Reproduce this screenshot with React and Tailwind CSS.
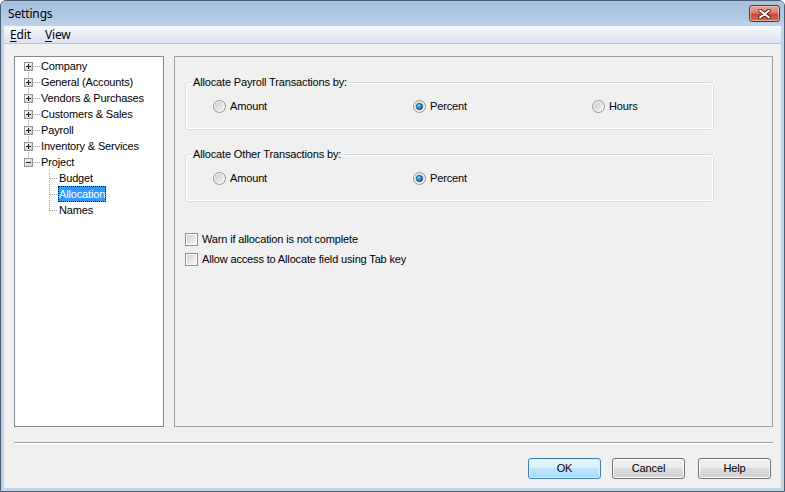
import React from "react";

const uiFont = "font-['Liberation_Sans',Arial,sans-serif] text-[11px] tracking-[-0.15px] text-black";
const captionFont = "font-['Noto_Sans','Open_Sans',sans-serif] text-[12px] text-black";

function Radio({ checked }) {
  return (
    <svg width="13" height="13" viewBox="0 0 13 13" className="shrink-0">
      <defs>
        <linearGradient id="radioFace" x1="0" y1="0" x2="1" y2="1">
          <stop offset="0" stopColor="#c9c9c9" />
          <stop offset="1" stopColor="#f8f8f8" />
        </linearGradient>
        <radialGradient id="radioDot" cx="0.4" cy="0.35" r="0.75">
          <stop offset="0" stopColor="#9fdcfb" />
          <stop offset="0.45" stopColor="#2a88cf" />
          <stop offset="1" stopColor="#0a3a6c" />
        </radialGradient>
      </defs>
      <circle cx="6.5" cy="6.5" r="6" fill="#f6f6f6" stroke="#8e8f8f" />
      <circle cx="6.5" cy="6.5" r="4.5" fill="url(#radioFace)" />
      {checked && <circle cx="6.5" cy="6.5" r="3.2" fill="url(#radioDot)" stroke="#16426e" strokeWidth="0.6" />}
    </svg>
  );
}

function RadioOption({ label, checked, className = "" }) {
  return (
    <div className={`flex items-center gap-[4px] h-[13px] ${className}`}>
      <Radio checked={checked} />
      <span className="leading-[13px]">{label}</span>
    </div>
  );
}

function CheckBox({ label }) {
  return (
    <div className="flex items-center gap-[4px] h-[13px]">
      <span className="w-[13px] h-[13px] border border-[#8e8f8f] bg-white p-[1px] shrink-0">
        <span className="block w-full h-full bg-gradient-to-br from-[#d2d2d2] to-[#f7f7f7]" />
      </span>
      <span className="leading-[13px]">{label}</span>
    </div>
  );
}

function GroupBox({ title, children, className = "" }) {
  return (
    <fieldset
      className={`border border-[#d5dfe5] rounded-[3px] shadow-[inset_0_0_0_1px_#ffffff] pt-[11px] pb-[16px] ${className}`}
    >
      <legend className="ml-[6px] px-[1px] leading-[13px] bg-[#f0f0f0]">{title}</legend>
      {children}
    </fieldset>
  );
}

function Expander({ open }) {
  return (
    <>
      <defs>
        <linearGradient id="boxFace" x1="0" y1="0" x2="1" y2="1">
          <stop offset="0" stopColor="#ffffff" />
          <stop offset="1" stopColor="#c8c8c8" />
        </linearGradient>
      </defs>
      <rect x="9.5" y="4.5" width="8" height="8" fill="url(#boxFace)" stroke="#919191" />
      <line x1="11" y1="8.5" x2="16" y2="8.5" stroke="#202020" />
      {!open && <line x1="13.5" y1="6" x2="13.5" y2="11" stroke="#202020" />}
    </>
  );
}

const treeItems = [
  { label: "Company", pos: "first" },
  { label: "General (Accounts)" },
  { label: "Vendors & Purchases" },
  { label: "Customers & Sales" },
  { label: "Payroll" },
  { label: "Inventory & Services" },
  { label: "Project", pos: "last", open: true },
  { label: "Budget", child: true },
  { label: "Allocation", child: true, selected: true },
  { label: "Names", child: true, pos: "last" },
];

function TreeRow({ item }) {
  const dots = { stroke: "#a0a0a0", strokeDasharray: "1 1" };
  if (item.child) {
    return (
      <div className="flex items-center h-[16px]">
        <svg width="43" height="16" className="shrink-0">
          <line x1="34.5" y1="0" x2="34.5" y2={item.pos === "last" ? 9 : 16} {...dots} />
          <line x1="35" y1="8.5" x2="43" y2="8.5" {...dots} />
        </svg>
        <span
          className={`leading-[14px] border border-dotted whitespace-nowrap ${
            item.selected ? "bg-[#3399ff] text-white border-[#1a1a1a]" : "border-transparent"
          }`}
        >
          {item.label}
        </span>
      </div>
    );
  }
  return (
    <div className="flex items-center h-[16px]">
      <svg width="25" height="16" className="shrink-0">
        <line
          x1="13.5"
          y1={item.pos === "first" ? 8 : 0}
          x2="13.5"
          y2={item.pos === "last" ? 8 : 16}
          {...dots}
        />
        <line x1="18" y1="8.5" x2="25" y2="8.5" {...dots} />
        <Expander open={item.open} />
      </svg>
      <span className="leading-[14px] border border-transparent whitespace-nowrap">{item.label}</span>
    </div>
  );
}

function DialogButton({ label, primary, className = "" }) {
  return (
    <button
      className={`w-[73px] h-[21px] rounded-[3px] border flex items-center justify-center leading-none ${
        primary
          ? "border-[#3c7fb1] bg-[linear-gradient(#eaf6fd_0%,#d9f0fc_45%,#bee6fd_50%,#a7d9f5_100%)] shadow-[inset_0_0_0_1px_#d8effc]"
          : "border-[#707070] bg-[linear-gradient(#f2f2f2_0%,#ebebeb_45%,#dddddd_50%,#cfcfcf_100%)] shadow-[inset_0_0_0_1px_#fcfcfc]"
      } ${className}`}
    >
      {label}
    </button>
  );
}

function CloseButton() {
  return (
    <div className="w-[31px] h-[17px] rounded-[3px] border border-[#6b2a22] bg-[linear-gradient(#e9a99b_0%,#dc7d6c_45%,#c7483a_55%,#d26b52_100%)] shadow-[inset_0_0_0_1px_rgba(255,220,210,0.55)] flex items-center justify-center">
      <svg width="13" height="10" viewBox="0 0 13 10">
        <path d="M2 1.5 L11 8.5 M11 1.5 L2 8.5" stroke="#4a1710" strokeWidth="3.6" strokeLinecap="round" />
        <path d="M2 1.5 L11 8.5 M11 1.5 L2 8.5" stroke="#ffffff" strokeWidth="2" strokeLinecap="round" />
      </svg>
    </div>
  );
}

export default function App() {
  return (
    <div className={`w-[785px] h-[492px] bg-white ${uiFont}`}>
      <div className="w-full h-full flex flex-col rounded-t-[6px] border border-[#4a5d72] bg-[#bfd3ea] overflow-hidden">
        {/* caption */}
        <div className="h-[25px] shrink-0 flex items-start justify-between pl-[7px] pr-[4px] pt-[4px] bg-[linear-gradient(#a6c0dd,#b3cae4_70%,#bed2ea)]">
          <span className={`${captionFont} leading-[17px]`}>Settings</span>
          <CloseButton />
        </div>

        <div className="flex-1 flex flex-col mx-[3px] mb-[3px] bg-[#f0f0f0]">
          {/* menu bar */}
          <div className={`h-[18px] shrink-0 flex items-center gap-[14px] pl-[6px] bg-[linear-gradient(#f6f8fc,#e6ebf5_60%,#dbe2f1)] border-b border-[#b9c1d3] ${captionFont}`}>
            <span>
              <span className="underline underline-offset-2">E</span>dit
            </span>
            <span>
              <span className="underline underline-offset-2">V</span>iew
            </span>
          </div>

          {/* body */}
          <div className="flex-1 flex flex-col pt-[12px] pl-[10px] pr-[8px] pb-[9px]">
            <div className="h-[371px] flex gap-[10px]">
              {/* navigation tree */}
              <div className="w-[150px] shrink-0 border border-[#828790] bg-white pt-[1px]">
                {treeItems.map((item) => (
                  <TreeRow key={item.label} item={item} />
                ))}
              </div>

              {/* options page */}
              <div className="flex-1 border border-[#a0a0a0] bg-[#f0f0f0] pt-[19px] pl-[10px]">
                <GroupBox title="Allocate Payroll Transactions by:" className="w-[529px]">
                  <div className="flex pl-[27px]">
                    <RadioOption label="Amount" className="w-[200px]" />
                    <RadioOption label="Percent" checked className="w-[179px]" />
                    <RadioOption label="Hours" />
                  </div>
                </GroupBox>

                <GroupBox title="Allocate Other Transactions by:" className="w-[529px] mt-[18px]">
                  <div className="flex pl-[27px]">
                    <RadioOption label="Amount" className="w-[200px]" />
                    <RadioOption label="Percent" checked />
                  </div>
                </GroupBox>

                <div className="mt-[31px] flex flex-col gap-[7px]">
                  <CheckBox label="Warn if allocation is not complete" />
                  <CheckBox label="Allow access to Allocate field using Tab key" />
                </div>
              </div>
            </div>

            {/* separator */}
            <div className="mt-[15px] border-t border-[#a0a0a0] border-b border-b-white" />

            {/* dialog buttons */}
            <div className="mt-[14px] flex justify-end pr-[2px]">
              <DialogButton label="OK" primary />
              <DialogButton label="Cancel" className="ml-[11px]" />
              <DialogButton label="Help" className="ml-[13px]" />
            </div>
          </div>
        </div>
      </div>
    </div>
  );
}
